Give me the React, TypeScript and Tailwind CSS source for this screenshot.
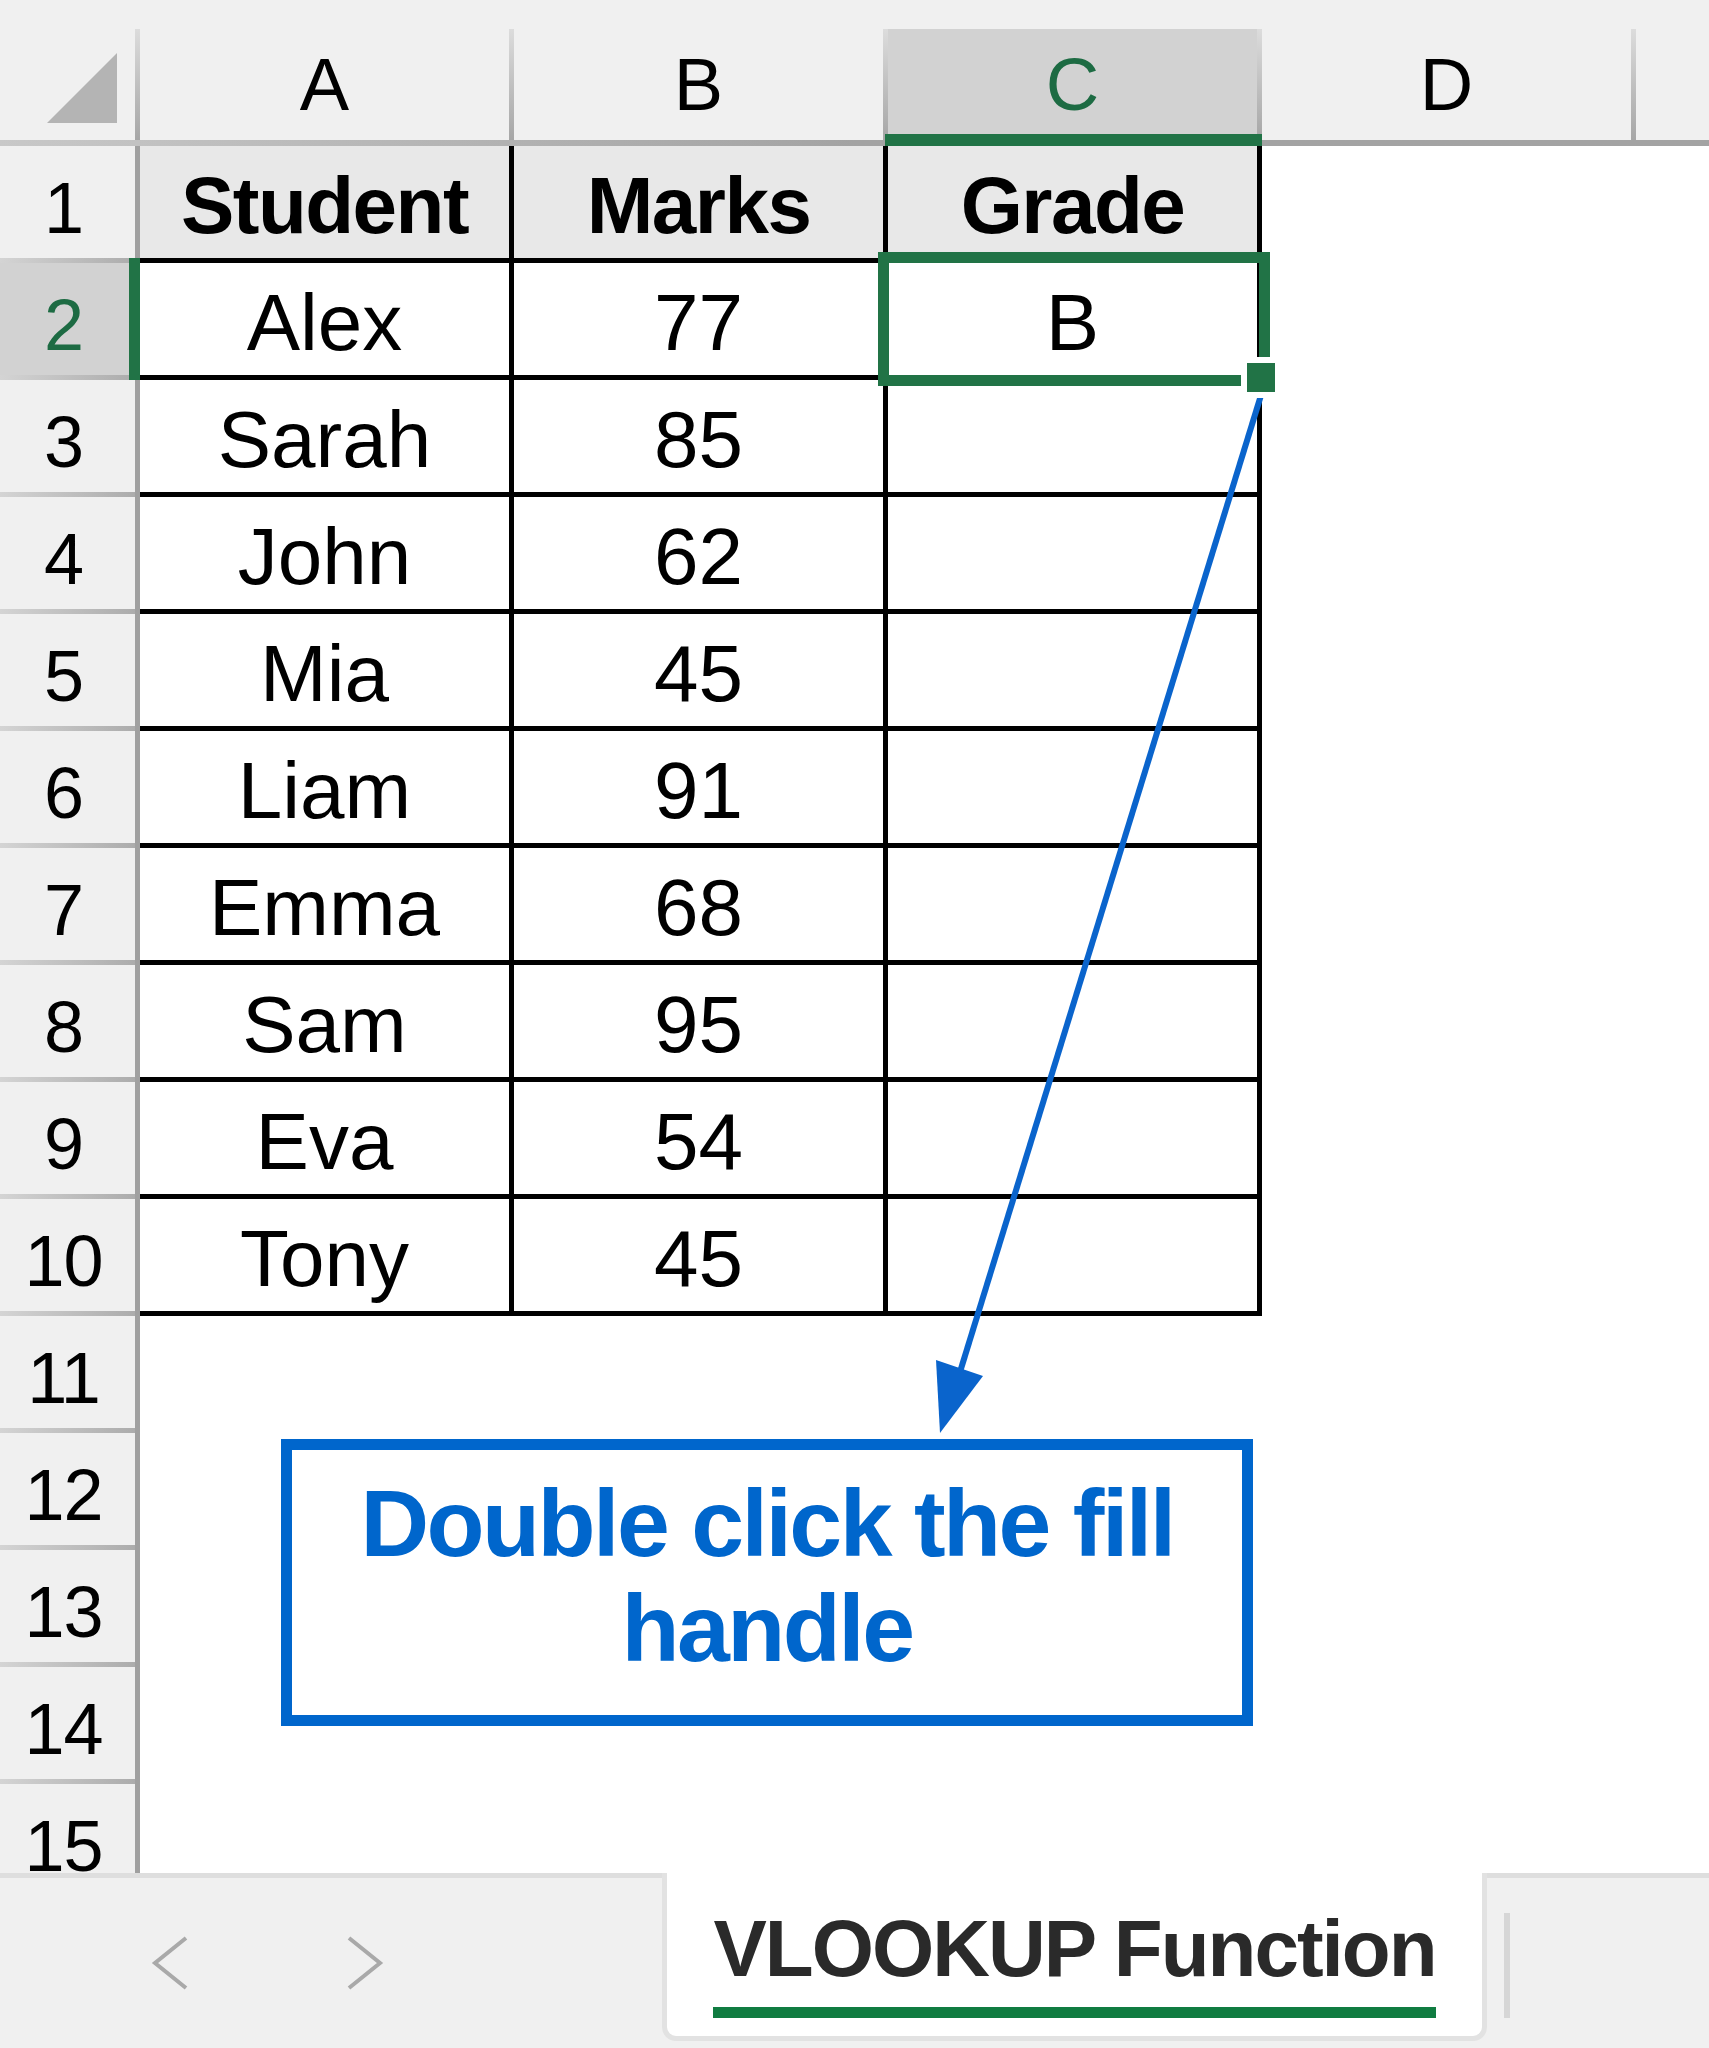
import React from "react";

const rows: [string, string, string][] = [
  ["Alex", "77", "B"],
  ["Sarah", "85", ""],
  ["John", "62", ""],
  ["Mia", "45", ""],
  ["Liam", "91", ""],
  ["Emma", "68", ""],
  ["Sam", "95", ""],
  ["Eva", "54", ""],
  ["Tony", "45", ""],
];

function ColSep() {
  return <div className="w-[5px] shrink-0 bg-linear-to-b from-[#dcdcdc] to-[#a6a6a6]" />;
}

function HeaderCell({ label, selected }: { label: string; selected?: boolean }) {
  return (
    <div className="relative flex w-[374px] shrink-0">
      <div
        className={`flex flex-1 items-center justify-center text-[74px] leading-none ${
          selected ? "bg-[#d2d2d2] text-[#1d6b43]" : "text-black"
        }`}
      >
        {label}
      </div>
      <ColSep />
      {selected && <div className="absolute -left-[3px] right-0 -bottom-[6px] h-[12px] bg-[#217346]" />}
    </div>
  );
}

function RowHeader({ n, selected }: { n: number; selected?: boolean }) {
  return (
    <div className="relative flex w-[140px] shrink-0">
      <div className="flex w-[135px] flex-col">
        <div
          className={`flex flex-1 items-center justify-center pr-[8px] pt-[11px] text-[72px] leading-none tracking-[-1px] ${
            selected ? "bg-[#d2d2d2] text-[#1d6b43]" : "bg-[#f0f0f0] text-black"
          }`}
        >
          {n}
        </div>
        <div className="h-[5px] bg-linear-to-r from-[#d4d4d4] to-[#acacac]" />
      </div>
      <div className="w-[5px] bg-[#a0a0a0]" />
      {selected && <div className="absolute right-0 -top-[5px] bottom-0 w-[11px] bg-[#217346]" />}
    </div>
  );
}

function Cell({ text, bordered, header }: { text?: string; bordered?: boolean; header?: boolean }) {
  return (
    <div
      className={`flex w-[374px] shrink-0 items-center justify-center pt-[7px] text-[80px] leading-none text-black ${
        bordered ? "border-r-[5px] border-b-[5px] border-black" : ""
      } ${header ? "bg-[#e8e8e8] font-bold tracking-[-1.5px]" : ""}`}
    >
      {text}
    </div>
  );
}

export default function App() {
  const allRows = Array.from({ length: 15 }, (_, i) => i + 1);
  return (
    <div className="relative h-[2048px] w-[1709px] overflow-hidden bg-white font-['Liberation_Sans',Arial,sans-serif] text-black">
      {/* top band */}
      <div className="h-[29px] bg-[#f0f0f0]" />

      {/* column headers */}
      <div className="flex h-[111px] bg-[#f0f0f0]">
        <div className="relative flex w-[140px] shrink-0">
          <div className="relative w-[135px]">
            <svg className="absolute left-0 top-0" width="135" height="111" viewBox="0 0 135 111">
              <polygon points="117,24 117,94 47,94" fill="#b4b4b4" />
            </svg>
          </div>
          <ColSep />
        </div>
        <HeaderCell label="A" />
        <HeaderCell label="B" />
        <HeaderCell label="C" selected />
        <HeaderCell label="D" />
        <div className="flex-1" />
      </div>
      <div className="h-[6px] bg-linear-to-r from-[#c8c8c8] via-[#a3a3a3] to-[#a3a3a3]" />

      {/* grid */}
      <div className="h-[1727px] overflow-hidden">
        {allRows.map((r) => {
          const isHeader = r === 1;
          const d = r >= 2 && r <= 10 ? rows[r - 2] : null;
          const bordered = r <= 10;
          return (
            <div key={r} className="flex h-[117px] shrink-0">
              <RowHeader n={r} selected={r === 2} />
              {isHeader ? (
                <>
                  <Cell text="Student" bordered header />
                  <Cell text="Marks" bordered header />
                  <Cell text="Grade" bordered header />
                </>
              ) : (
                <>
                  <Cell text={d ? d[0] : ""} bordered={bordered} />
                  <Cell text={d ? d[1] : ""} bordered={bordered} />
                  <Cell text={d ? d[2] : ""} bordered={bordered} />
                </>
              )}
              <Cell />
              <div className="flex-1" />
            </div>
          );
        })}
      </div>

      {/* sheet tab bar */}
      <div className="flex h-[175px] border-t-[5px] border-[#dedede] bg-[#f0f0f0] pl-[151px]">
        <svg className="mt-[57px] shrink-0" width="38" height="56" viewBox="0 0 38 56">
          <polyline points="35,3 4,28 35,53" fill="none" stroke="#a9a9a9" strokeWidth="4" />
        </svg>
        <svg className="ml-[157px] mt-[57px] shrink-0" width="38" height="56" viewBox="0 0 38 56">
          <polyline points="3,3 34,28 3,53" fill="none" stroke="#a9a9a9" strokeWidth="4" />
        </svg>
        <div className="-mt-[5px] ml-[278px] flex h-[168px] w-[825px] shrink-0 flex-col items-center rounded-b-[14px] border-x-[5px] border-b-[5px] border-[#e2e2e2] bg-white pt-[36px]">
          <div className="flex flex-col">
            <div className="text-[80px] font-bold leading-none tracking-[-2px] text-[#2a2a2a]">VLOOKUP Function</div>
            <div className="mt-[18px] h-[11px] w-full bg-[#107c41]" />
          </div>
        </div>
        <div className="ml-[17px] mt-[35px] h-[105px] w-[6px] shrink-0 bg-[#d6d6d6]" />
      </div>

      {/* callout text box */}
      <div className="absolute left-[281px] top-[1439px] flex h-[287px] w-[972px] flex-col items-center justify-center border-[11px] border-[#0066cc] bg-white pb-[14px] text-center text-[95px] font-bold leading-[105px] tracking-[-2.5px] text-[#0066cc]">
        <span>Double click the fill</span>
        <span>handle</span>
      </div>

      {/* arrow */}
      <svg className="pointer-events-none absolute left-0 top-0" width="1709" height="2048" viewBox="0 0 1709 2048">
        <line x1="1262" y1="392" x2="960" y2="1372" stroke="#0a64cc" strokeWidth="6" />
        <polygon points="940,1433 936,1360 983,1376" fill="#0a64cc" />
      </svg>

      {/* selection */}
      <div className="pointer-events-none absolute left-[878px] top-[252px] h-[134px] w-[392px] border-[11px] border-[#217346]" />
      <div className="pointer-events-none absolute left-[1241px] top-[357px] h-[41px] w-[40px] border-[6px] border-white bg-[#217346]" />
    </div>
  );
}
